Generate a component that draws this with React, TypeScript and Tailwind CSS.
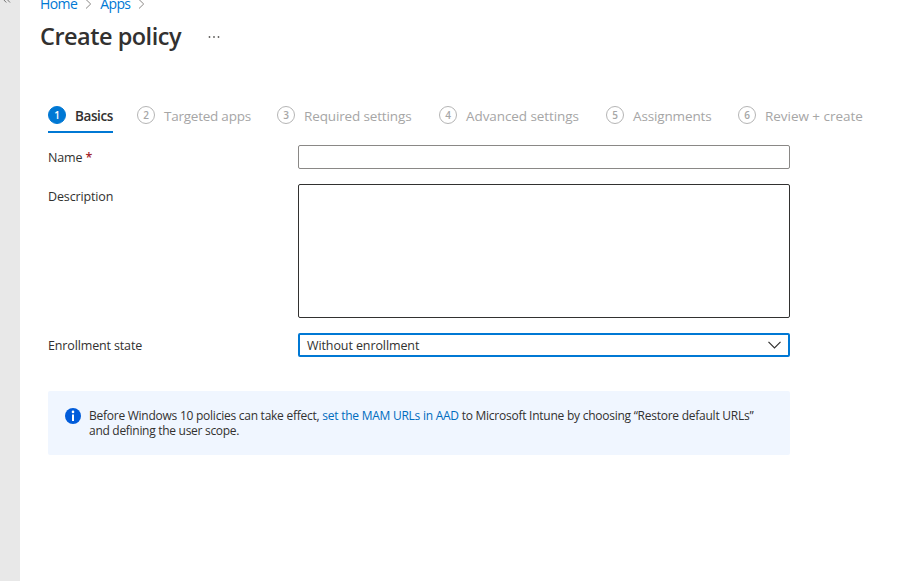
import type { ReactNode } from "react";

function Crumb({ children }: { children: ReactNode }) {
  return (
    <>
      <a className="text-[14px] leading-[20px] tracking-[-0.6px] text-[#0078d4]">{children}</a>
      <svg className="h-[10px] w-[7px]" viewBox="0 0 7 10" fill="none" stroke="#8a8886">
        <path d="M1 .5 5.7 5 1 9.5" />
      </svg>
    </>
  );
}

const steps = [
  { label: "Basics", box: "w-[65px] mr-6", text: "tracking-[-0.4px]" },
  { label: "Targeted apps", box: "w-[114px] mr-[26px]", text: "tracking-[-0.24px]" },
  { label: "Required settings", box: "w-[135px] mr-[27px]", text: "tracking-[-0.14px]" },
  { label: "Advanced settings", box: "w-[141px] mr-[26px]", text: "tracking-[-0.08px]" },
  { label: "Assignments", box: "w-[106px] mr-[26px]", text: "tracking-[-0.14px]" },
  { label: "Review + create", box: "w-[126px]", text: "tracking-[-0.04px]" },
];

function Step({ index }: { index: number }) {
  const step = steps[index];
  const active = index === 0;
  return (
    <div className={`flex h-7 shrink-0 items-start whitespace-nowrap ${step.box} ${active ? "border-b-2 border-[#0078d4]" : ""}`}>
      <span
        className={`mt-px flex size-[18px] shrink-0 items-center justify-center rounded-full border text-[10px] leading-none font-semibold ${
          active ? "border-[#0078d4] bg-[#0078d4] text-white" : "border-[#b5b5b5] text-[#a6a6a6]"
        }`}
      >
        {index + 1}
      </span>
      <span
        className={`mt-px ml-[9px] text-[13.5px] leading-5 ${step.text} ${
          active ? "font-semibold text-[#323130]" : "text-[#a6a6a6]"
        }`}
      >
        {step.label}
      </span>
    </div>
  );
}

function Field({ label, required, children }: { label: string; required?: boolean; children: ReactNode }) {
  return (
    <div className="flex">
      <label className="mt-1 w-[250px] shrink-0 leading-[18px] tracking-[-0.14px]">
        {label}
        {required && <span className="font-semibold text-[#a4262c]"> *</span>}
      </label>
      {children}
    </div>
  );
}

export default function App() {
  return (
    <div className="flex h-[581px] w-[910px] overflow-hidden bg-white font-['Open_Sans','Noto_Sans',sans-serif] text-[12.5px] text-[#323130]">
      <aside className="w-5 shrink-0 bg-[#e8e8e8]">
        <svg className="mt-[-5px] ml-[2px] h-[8px] w-[9px]" viewBox="0 0 9 8" fill="none" stroke="#777">
          <path d="M4.3 .5 1 4l3.3 3.5M8 .5 4.7 4 8 7.5" />
        </svg>
      </aside>
      <main className="w-[890px] pl-5">
        <nav className="-mt-[6px] flex h-5 items-center gap-2">
          <Crumb>Home</Crumb>
          <Crumb>Apps</Crumb>
        </nav>
        <header className="mt-[6px] flex h-8 items-center">
          <h1 className="w-[168px] text-[23.5px] leading-8 font-semibold tracking-[-0.5px] whitespace-nowrap">Create policy</h1>
          <svg className="mt-[2px] h-[2px] w-3" viewBox="0 0 12 2" fill="#605e5c">
            <circle cx="1.5" cy="1" r=".9" />
            <circle cx="6" cy="1" r=".9" />
            <circle cx="10.5" cy="1" r=".9" />
          </svg>
        </header>
        <div className="mt-[53px] ml-2">
          <div className="flex">
            {steps.map((step, index) => (
              <Step key={step.label} index={index} />
            ))}
          </div>
          <form className="mt-3 w-[742px]">
            <Field label="Name" required>
              <input className="h-6 w-[492px] rounded-[2px] border border-[#8a8886] px-2 outline-none" />
            </Field>
            <div className="mt-[15px]">
              <Field label="Description">
                <textarea className="block h-[134px] w-[492px] resize-none rounded-[2px] border border-[#323130] p-2 outline-none" />
              </Field>
            </div>
            <div className="mt-[15px]">
              <Field label="Enrollment state">
                <button type="button" className="flex h-6 w-[492px] items-center justify-between rounded-[2px] border-2 border-[#0078d4] px-[7px]">
                  <span className="pt-[2px] leading-[18px] tracking-[-0.1px]">Without enrollment</span>
                  <svg className="h-[8px] w-[13px]" viewBox="0 0 13 8" fill="none" stroke="#323130" strokeWidth="1.2">
                    <path d="M.5 .8 6.5 7 12.5 .8" />
                  </svg>
                </button>
              </Field>
            </div>
          </form>
          <section className="mt-[34px] flex h-16 w-[742px] rounded-[2px] bg-[#f0f6ff] pt-[17px] pl-[17px]">
            <svg className="size-4 shrink-0" viewBox="0 0 16 16">
              <circle cx="8" cy="8" r="8" fill="#015cda" />
              <circle cx="8" cy="3.9" r="1.3" fill="#fff" />
              <path d="M7 6.5h2V13H7z" fill="#fff" />
            </svg>
            <div className="ml-2 text-[12px] leading-[15px] whitespace-nowrap">
              <p className="tracking-[-0.25px]">
                Before Windows 10 policies can take effect, <a className="text-[#006cbe]">set the MAM URLs in AAD</a> to Microsoft Intune by choosing “Restore default URLs”
              </p>
              <p className="tracking-[-0.29px]">and defining the user scope.</p>
            </div>
          </section>
        </div>
      </main>
    </div>
  );
}
